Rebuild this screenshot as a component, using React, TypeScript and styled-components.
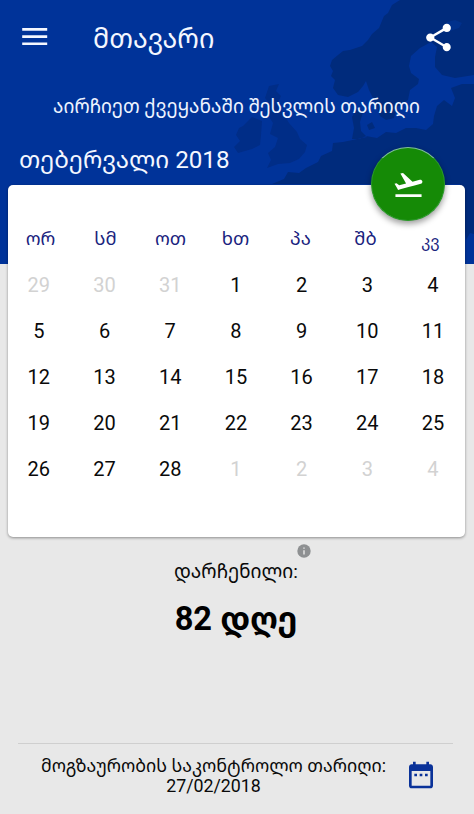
import React from "react";
import styled, { createGlobalStyle } from "styled-components";

const GlobalStyle = createGlobalStyle`
  * { box-sizing: border-box; }
  body {
    margin: 0;
    background: #e8e8e8;
    color: #0a0a0a;
    font-family: Roboto, "Noto Sans Georgian", "DejaVu Sans", sans-serif;
  }
`;

const Screen = styled.main`
  position: relative;
  width: 474px;
  height: 814px;
  display: flex;
  flex-direction: column;
  overflow: hidden;
  isolation: isolate;
  background: #e8e8e8;
`;

const Backdrop = styled.div`
  position: absolute;
  inset: 0 0 auto;
  height: 264px;
  z-index: -1;
  background: #003399;
  svg { display: block; }
`;

const Toolbar = styled.header`
  display: flex;
  align-items: center;
  height: 74px;
  padding: 0 19px 0 14px;
  color: #f4f7ff;
`;

const IconButton = styled.button`
  display: flex;
  align-items: center;
  justify-content: center;
  padding: 0;
  border: 0;
  background: none;
  color: inherit;
`;

const Title = styled.h1`
  flex: 1;
  margin: 3px 0 0 37px;
  font-size: 27px;
  font-weight: 400;
  line-height: 36px;
`;

const Prompt = styled.p`
  height: 64px;
  margin: 0;
  padding: 19px 1px 0 0;
  text-align: center;
  font-size: 19px;
  line-height: 28px;
  color: #eef3ff;
`;

const Month = styled.h2`
  height: 47px;
  margin: 0;
  padding: 6px 0 0 19px;
  font-size: 24.2px;
  font-weight: 400;
  line-height: 32px;
  color: #f4f7ff;
`;

const Card = styled.section`
  position: relative;
  width: 457px;
  height: 352px;
  margin-left: 8px;
  padding-top: 34px;
  border-radius: 5px;
  background: #fff;
  box-shadow: 0 1px 3px rgba(0, 0, 0, 0.4);
`;

const Fab = styled.button`
  position: absolute;
  top: -38px;
  right: 20px;
  width: 74px;
  height: 74px;
  display: flex;
  align-items: center;
  justify-content: center;
  padding: 0;
  border: 1px solid #2b9a2a;
  border-top-color: #7fbf9a;
  border-radius: 50%;
  background: #158a06;
  color: #fff;
  box-shadow: 0 3px 6px rgba(0, 0, 0, 0.4);
`;

const Weekdays = styled.div`
  display: grid;
  grid-template-columns: repeat(7, 65px);
  height: 42.5px;
  align-items: start;
  padding-top: 6px;
  color: #1a237e;
`;

const Weekday = styled.span<{ $small?: boolean }>`
  text-align: center;
  font-size: ${(p) => (p.$small ? 16 : 18.5)}px;
  line-height: 28px;
  padding-top: ${(p) => (p.$small ? 3 : 0)}px;
`;

const Days = styled.div`
  display: grid;
  grid-template-columns: repeat(7, 65.7px);
  grid-auto-rows: 46.2px;
  margin-left: -2px;
`;

const Day = styled.span<{ $muted: boolean }>`
  display: flex;
  align-items: center;
  justify-content: center;
  font-size: 20px;
  color: ${(p) => (p.$muted ? "#d2d2d2" : "#0a0a0a")};
`;

const Remaining = styled.section`
  position: relative;
  display: flex;
  flex-direction: column;
  align-items: center;
  flex: 1;
  padding: 20px 2px 0 0;
`;

const InfoBadge = styled.span`
  position: absolute;
  top: 7px;
  left: 297px;
  display: flex;
`;

const RemainingLabel = styled.span`
  font-size: 19.1px;
  line-height: 30px;
`;

const RemainingValue = styled.strong`
  margin-top: 10px;
  font-size: 32.6px;
  line-height: 44px;
  font-weight: 700;
  color: #000;
`;

const Footer = styled.footer`
  display: flex;
  align-items: center;
  height: 71px;
  margin: 0 21px 0 18px;
  padding: 0 16px 7px 21px;
  border-top: 1px solid #cfcfcf;
`;

const ControlDate = styled.div`
  flex: 1;
  margin-right: 17px;
  text-align: center;
  white-space: nowrap;
  font-size: 17.8px;
  line-height: 20px;
`;

const Line = styled.div``;

const CalendarButton = styled(IconButton)`
  margin-top: -2px;
`;

const weekdays = ["ორ", "სმ", "ოთ", "ხთ", "პა", "შბ", "კვ"];
const days = [29, 30, 31, ...Array.from({ length: 28 }, (_, i) => i + 1), 1, 2, 3, 4];

const EuropeMap = () => (
  <svg width="474" height="264" viewBox="0 0 474 264" aria-hidden="true">
    <g fill="#002b7c">
      <path d="M400 0L392 5 388 13 384 16 379 28 372 34 368 40 362 46 350 50 343 51 338 55 332 60 330 66 333 71 331 76 335 80 333 88 338 95 348 97 358 92 363 86 366 81 369 90 376 104 380 116 386 120 394 118 397 107 408 100 410 90 418 84 419 79 411 73 409 66 411 56 420 48 431 42 437 47 435 57 435 67 442 75 455 78 474 75V0Z" />
      <path d="M474 84L462 84 451 88 455 98 452 106 444 100 437 106 434 116 433 124 426 130 416 128 406 128 396 133 386 132 377 138 366 136 360 139 352 139 354 128 352 117 357 109 363 112 360 122 361 131 367 137 343 142 333 143 332 151 321 156 318 162 306 168 299 173 288 172 284 179 272 184 460 184 466 240 470 233 474 234Z" />
      <path d="M367 125L372 122 375 128 369 130Z" />
    </g>
    <g fill="#002d87">
      <path d="M269 86L279 84 276 91 281 96 277 105 284 115 289 123 297 132 300 139 307 145 305 152 299 159 290 163 278 164 267 168 271 160 268 153 275 147 278 138 270 134 273 123 266 112 269 103 265 98Z" />
      <path d="M243 126L252 117 262 121 261 135 260 145 252 149 238 153 234 147 240 141 236 135 239 128Z" />
    </g>
    <path fill="#00318c" d="M447 22L455 20 462 23 459 28 450 31 447 28Z" />
  </svg>
);

export default function App() {
  return (
    <Screen>
      <GlobalStyle />
      <Backdrop><EuropeMap /></Backdrop>
      <Toolbar>
        <IconButton aria-label="მენიუ">
          <svg width="42" height="42" viewBox="0 0 42 42" fill="currentColor">
            <path d="M8.2 12h25v2.7h-25zM8.2 19.2h25v2.7h-25zM8.2 26.4h25v2.7h-25z" />
          </svg>
        </IconButton>
        <Title>მთავარი</Title>
        <IconButton aria-label="გაზიარება">
          <svg width="33" height="33" viewBox="0 0 24 24" fill="#fff">
            <path d="M18 16.08c-.76 0-1.44.3-1.96.77L8.91 12.7c.05-.23.09-.46.09-.7s-.04-.47-.09-.7l7.05-4.11c.54.5 1.25.81 2.04.81 1.66 0 3-1.34 3-3s-1.34-3-3-3-3 1.34-3 3c0 .24.04.47.09.7L8.04 9.81C7.5 9.31 6.79 9 6 9c-1.66 0-3 1.34-3 3s1.34 3 3 3c.79 0 1.5-.31 2.04-.81l7.12 4.16c-.05.21-.08.43-.08.65 0 1.61 1.31 2.92 2.92 2.92s2.92-1.31 2.92-2.92-1.31-2.92-2.92-2.92z" />
          </svg>
        </IconButton>
      </Toolbar>
      <Prompt>აირჩიეთ ქვეყანაში შესვლის თარიღი</Prompt>
      <Month>თებერვალი 2018</Month>
      <Card>
        <Fab aria-label="შესვლა">
          <svg width="33" height="33" viewBox="0 0 24 24" fill="currentColor">
            <path d="M2.5 19h19v2h-19zm19.57-9.36c-.21-.8-1.04-1.28-1.84-1.06L14.92 10l-6.9-6.43-1.93.51 4.14 7.17-4.97 1.33-1.97-1.54-1.45.39 1.82 3.16.77 1.33 1.6-.43 5.31-1.42 4.35-1.16L21 11.49c.81-.23 1.28-1.05 1.07-1.85z" />
          </svg>
        </Fab>
        <Weekdays>
          {weekdays.map((d, i) => <Weekday key={d} $small={i === 6}>{d}</Weekday>)}
        </Weekdays>
        <Days>
          {days.map((d, i) => <Day key={i} $muted={i < 3 || i > 30}>{d}</Day>)}
        </Days>
      </Card>
      <Remaining>
        <InfoBadge>
          <svg width="14" height="14" viewBox="0 0 14 14">
            <circle cx="7" cy="7" r="6.7" fill="#8e9092" />
            <path d="M6.3 3.4h1.4v1.4H6.3zM6.3 6.2h1.4v4.3H6.3z" fill="#e8e8e8" />
          </svg>
        </InfoBadge>
        <RemainingLabel>დარჩენილი:</RemainingLabel>
        <RemainingValue>82 დღე</RemainingValue>
      </Remaining>
      <Footer>
        <ControlDate>
          <Line>მოგზაურობის საკონტროლო თარიღი:</Line>
          <Line>27/02/2018</Line>
        </ControlDate>
        <CalendarButton aria-label="კალენდარი">
          <svg width="32" height="32" viewBox="0 0 24 24" fill="#0a3299">
            <path d="M9 11H7v2h2v-2zm4 0h-2v2h2v-2zm4 0h-2v2h2v-2zm2-7h-1V2h-2v2H8V2H6v2H5c-1.11 0-1.99.9-1.99 2L3 20c0 1.1.89 2 2 2h14c1.1 0 2-.9 2-2V6c0-1.1-.9-2-2-2zm0 16H5V9h14v11z" />
          </svg>
        </CalendarButton>
      </Footer>
    </Screen>
  );
}
